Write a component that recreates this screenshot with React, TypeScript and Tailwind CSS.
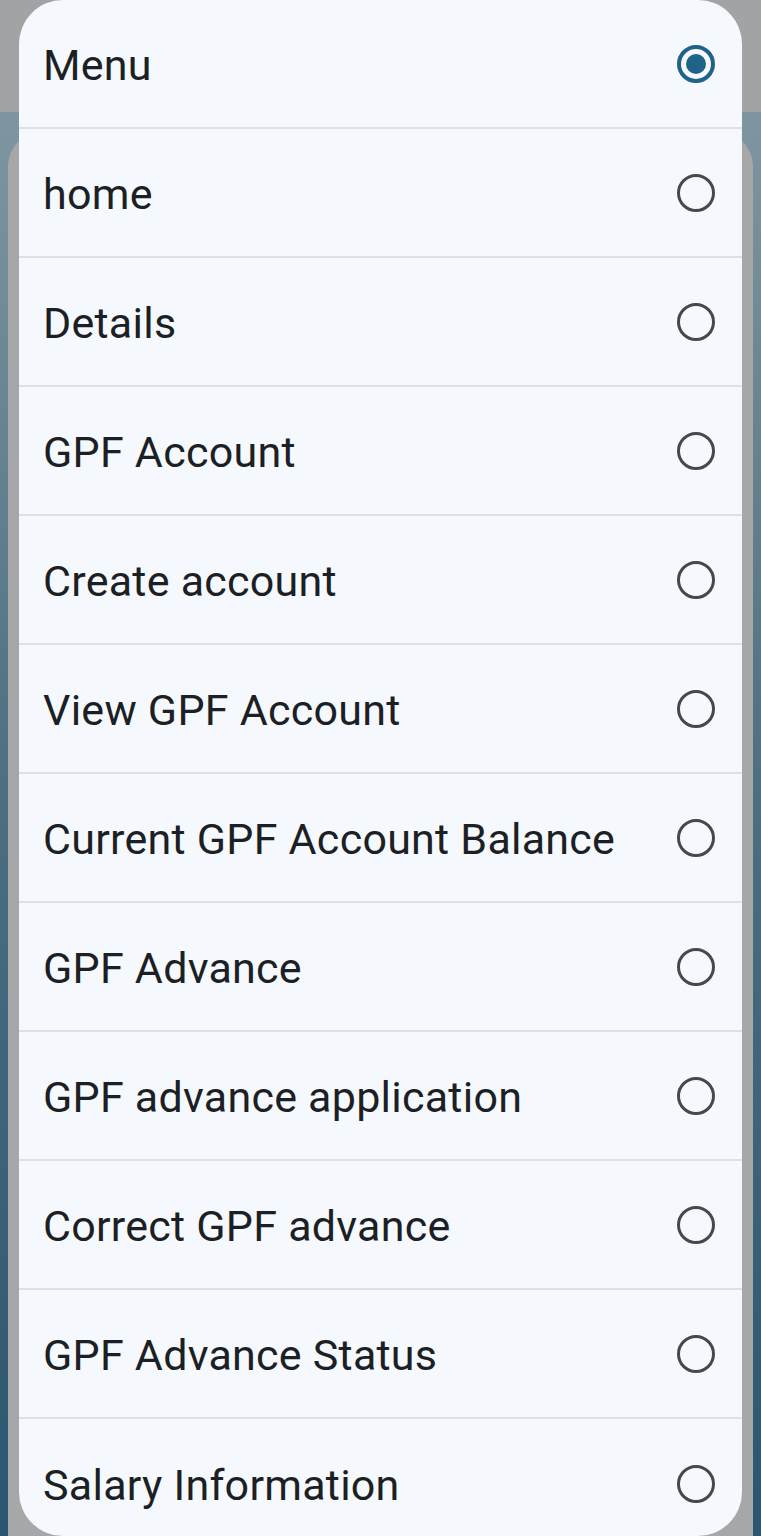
import { useState } from 'react';

const items = [
  'Menu',
  'home',
  'Details',
  'GPF Account',
  'Create account',
  'View GPF Account',
  'Current GPF Account Balance',
  'GPF Advance',
  'GPF advance application',
  'Correct GPF advance',
  'GPF Advance Status',
  'Salary Information',
];

const Radio = ({ checked }: { checked: boolean }) =>
  checked ? (
    <svg width="42" height="42" viewBox="0 0 42 42">
      <circle cx="21" cy="21" r="17" fill="none" stroke="#1f6488" strokeWidth="4" />
      <circle cx="21" cy="21" r="10" fill="#1f6488" />
    </svg>
  ) : (
    <svg width="42" height="42" viewBox="0 0 42 42">
      <circle cx="21" cy="21" r="17.5" fill="none" stroke="#45484d" strokeWidth="3" />
    </svg>
  );

const App = () => {
  const [selected, setSelected] = useState(0);

  return (
    <div className="relative h-[1536px] w-[761px] overflow-hidden flex flex-col font-['Roboto',sans-serif]">
      {/* Dimmed page behind the dialog */}
      <div className="h-[112px] bg-[#a1a3a5]" />
      <div className="flex-1 bg-gradient-to-b from-[#7f96a0] via-[#4a6d80] to-[#2b5670] pt-[20px] px-[8px]">
        <div className="h-full rounded-t-[34px] bg-[#a6a7a8]" />
      </div>

      {/* Dialog */}
      <div className="absolute left-[19px] top-0 w-[723px] h-[1536px] rounded-[44px] bg-[#f5f8fd] overflow-hidden">
        {items.map((label, i) => (
          <button
            key={label}
            onClick={() => setSelected(i)}
            className={`w-full h-[129px] flex items-center justify-between pl-[24px] pr-[25px] text-left ${
              i < items.length - 1 ? 'border-b-2 border-[#dde0e5]' : ''
            }`}
          >
            <span className="pt-[3px] text-[43px] leading-none tracking-[0.25px] text-[#1c1f24]">{label}</span>
            <Radio checked={selected === i} />
          </button>
        ))}
      </div>
    </div>
  );
};

export default App;
